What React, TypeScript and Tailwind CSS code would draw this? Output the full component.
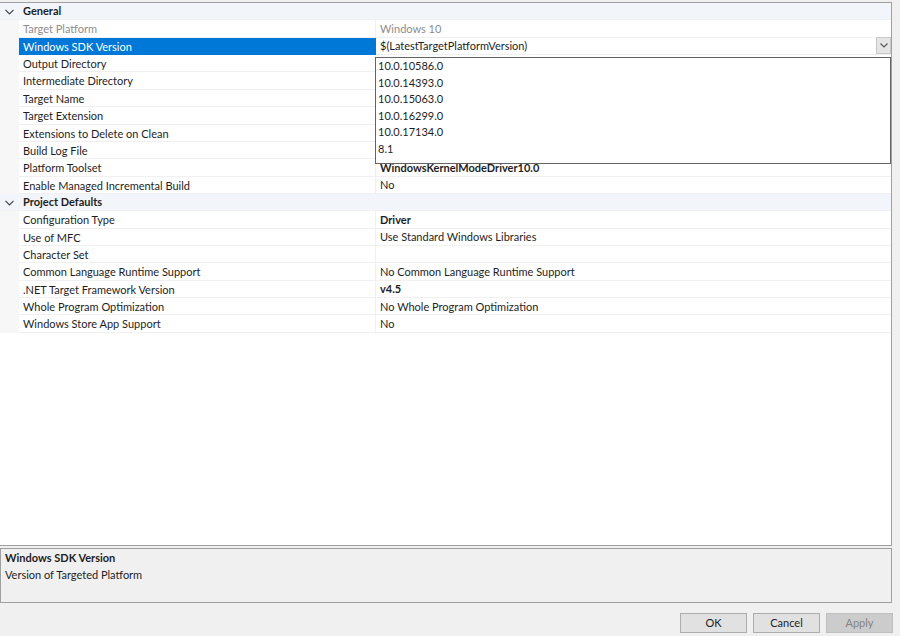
import React from 'react';

type Row = { name: string; value?: string; bold?: boolean; dim?: boolean; selected?: boolean };
type Section = { title: string; rows: Row[] };

const sections: Section[] = [
  {
    title: 'General',
    rows: [
      { name: 'Target Platform', value: 'Windows 10', dim: true },
      { name: 'Windows SDK Version', value: '$(LatestTargetPlatformVersion)', selected: true },
      { name: 'Output Directory' },
      { name: 'Intermediate Directory' },
      { name: 'Target Name' },
      { name: 'Target Extension' },
      { name: 'Extensions to Delete on Clean' },
      { name: 'Build Log File' },
      { name: 'Platform Toolset', value: 'WindowsKernelModeDriver10.0', bold: true },
      { name: 'Enable Managed Incremental Build', value: 'No' },
    ],
  },
  {
    title: 'Project Defaults',
    rows: [
      { name: 'Configuration Type', value: 'Driver', bold: true },
      { name: 'Use of MFC', value: 'Use Standard Windows Libraries' },
      { name: 'Character Set', value: '' },
      { name: 'Common Language Runtime Support', value: 'No Common Language Runtime Support' },
      { name: '.NET Target Framework Version', value: 'v4.5', bold: true },
      { name: 'Whole Program Optimization', value: 'No Whole Program Optimization' },
      { name: 'Windows Store App Support', value: 'No' },
    ],
  },
];

const sdkVersions = ['10.0.10586.0', '10.0.14393.0', '10.0.15063.0', '10.0.16299.0', '10.0.17134.0', '8.1'];

const Chevron: React.FC = () => (
  <svg width="9" height="6" viewBox="0 0 9 6" className="text-[#444]">
    <path d="M0.5 0.8 L4.5 4.8 L8.5 0.8" fill="none" stroke="currentColor" strokeWidth="1.2" />
  </svg>
);

const PropertyRow: React.FC<{ row: Row }> = ({ row }) => (
  <div className="flex h-[17.37px] leading-[17px]">
    <div className="w-[19px] shrink-0 bg-[#f7f7f7]" />
    <div
      className={`w-[357px] shrink-0 pl-[4px] border-b border-r ${
        row.selected
          ? 'bg-[#0078d7] text-white border-[#0078d7]'
          : `border-[#f0f0f0] ${row.dim ? 'text-[#8d8d8d]' : 'text-[#1e1e1e]'}`
      }`}
    >
      {row.name}
    </div>
    <div
      className={`flex-1 flex items-center pl-[4px] border-b border-[#f0f0f0] ${
        row.bold ? 'font-bold' : ''
      } ${row.dim ? 'text-[#8d8d8d]' : 'text-[#1e1e1e]'}`}
    >
      <span className="flex-1 truncate">{row.value}</span>
      {row.selected && (
        <div className="w-[15px] h-[17px] bg-[#e5e5e5] border border-[#c8c8c8] flex items-center justify-center">
          <svg width="8" height="5" viewBox="0 0 8 5" className="text-[#555]">
            <path d="M0.5 0.5 L4 4 L7.5 0.5" fill="none" stroke="currentColor" strokeWidth="1.1" />
          </svg>
        </div>
      )}
    </div>
  </div>
);

const App: React.FC = () => {
  return (
    <div
      className="w-[900px] h-[636px] bg-[#f0f0f0] flex flex-col text-[11px] text-[#1e1e1e] overflow-hidden"
      style={{ fontFamily: 'Lato, "Liberation Sans", sans-serif' }}
    >
      {/* Property grid */}
      <div className="relative mt-[2px] w-[892px] h-[544px] bg-white border-t border-r border-b border-[#a0a0a0] shrink-0">
        {sections.map((section) => (
          <div key={section.title}>
            <div className="flex items-center h-[17.37px] bg-[#f2f5fa] border-b border-[#eef1f6]">
              <div className="w-[19px] flex justify-center pt-[1px]">
                <Chevron />
              </div>
              <span className="pl-[4px] pt-[1px] font-bold text-[#1e1e1e]">{section.title}</span>
            </div>
            {section.rows.map((row) => (
              <PropertyRow key={row.name} row={row} />
            ))}
          </div>
        ))}

        {/* Open combo list */}
        <div className="absolute left-[375px] top-[54px] w-[516px] h-[107px] bg-white border border-[#646464] border-t-dotted leading-[15px]">
          {sdkVersions.map((v) => (
            <div key={v} className="h-[16.6px] pl-[2px] text-[#1e1e1e]">
              {v}
            </div>
          ))}
        </div>
      </div>

      {/* Description panel */}
      <div className="mt-[2px] w-[892px] h-[55px] border border-[#a0a0a0] bg-[#f0f0f0] px-[4px] shrink-0 leading-[17px]">
        <div className="font-bold">Windows SDK Version</div>
        <div>Version of Targeted Platform</div>
      </div>

      {/* Buttons */}
      <div className="flex justify-end gap-[6px] pr-[7px] mt-[10px]">
        <button className="w-[67px] h-[20px] bg-[#e1e1e1] border border-[#adadad] text-[#1e1e1e] leading-[18px]">OK</button>
        <button className="w-[67px] h-[20px] bg-[#e1e1e1] border border-[#adadad] text-[#1e1e1e] leading-[18px]">Cancel</button>
        <button className="w-[67px] h-[20px] bg-[#cccccc] border border-[#bfbfbf] text-[#838383] leading-[18px]">Apply</button>
      </div>
    </div>
  );
};

export default App;
